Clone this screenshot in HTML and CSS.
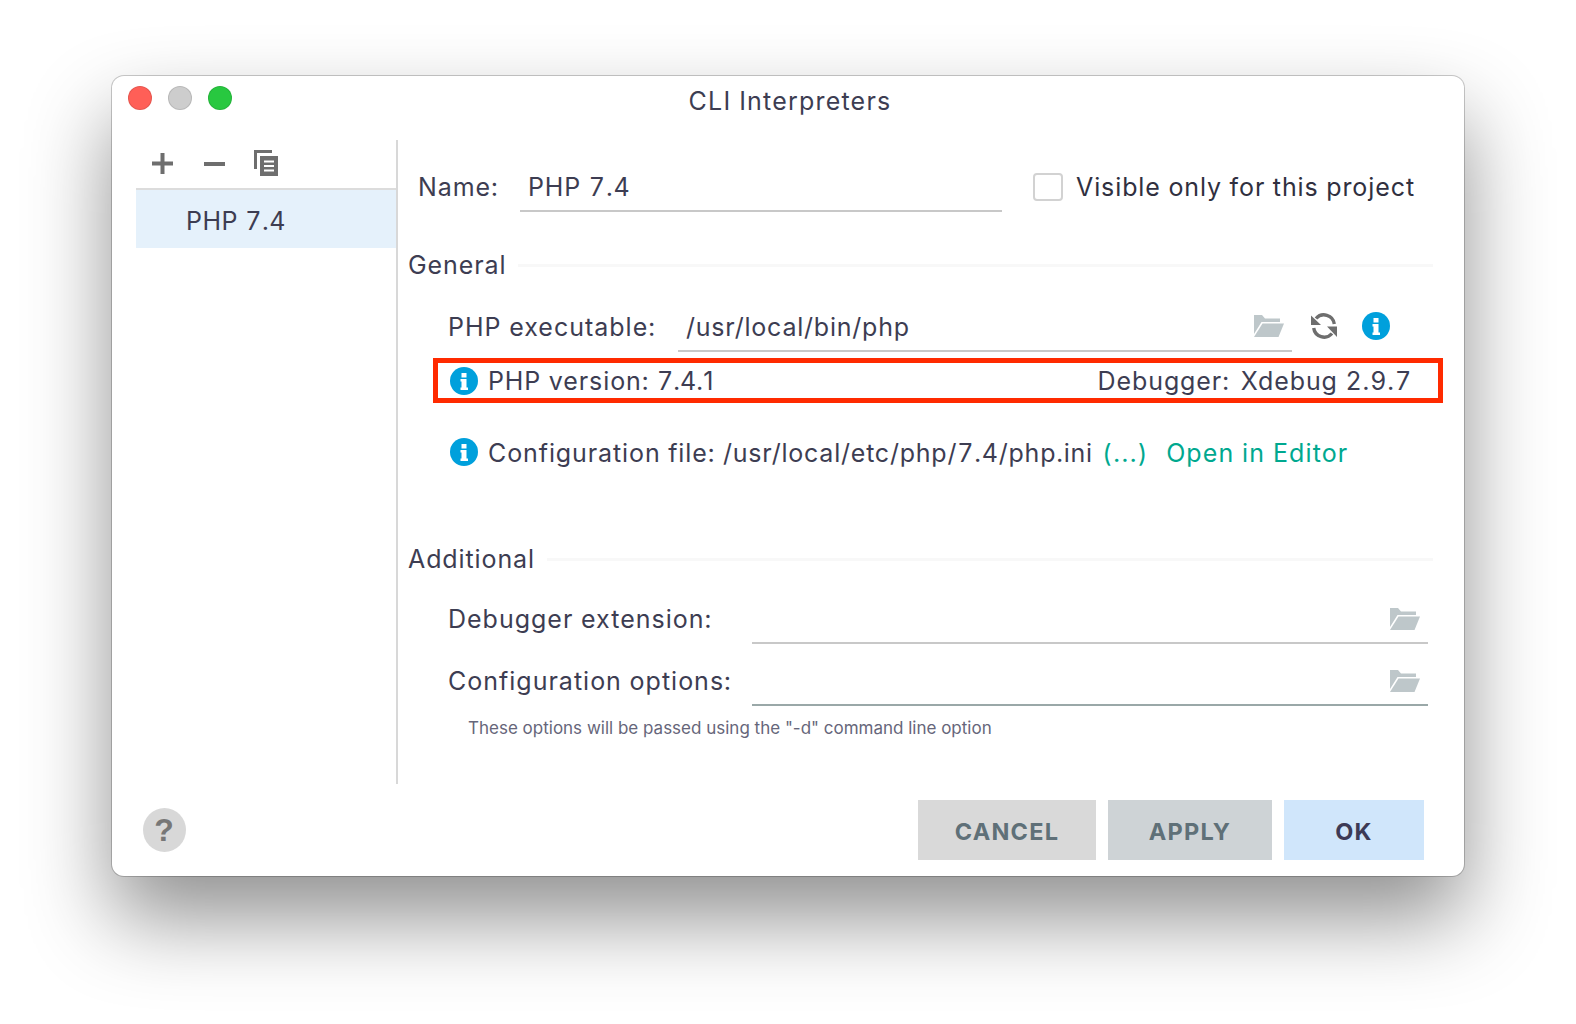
FILE: index.html
```html
<!DOCTYPE html>
<html lang="en">
<head>
<meta charset="utf-8">
<title>CLI Interpreters</title>
<link rel="stylesheet" href="styles.css">
</head>
<body>
<svg class="defs" width="0" height="0" aria-hidden="true">
  <symbol id="folder" viewBox="0 0 30 22">
    <path d="M0 0h8l3 3.5h15V7H7.5L0 19z"/>
    <path d="M8.5 8.5H30L24.5 22H0z"/>
  </symbol>
  <symbol id="info" viewBox="0 0 28 28">
    <circle cx="14" cy="14" r="14" fill="#00a0dc"/>
    <path fill="#fff" d="M11.500 6h5v4.500h-5zM10.500 12h6v8.500h1.500V23h-7.500v-2.500h1V14.500h-1z"/>
  </symbol>
</svg>
<main class="window">
  <header class="titlebar">
    <div class="lights">
      <span class="light red"></span>
      <span class="light gray"></span>
      <span class="light green"></span>
    </div>
    <div class="title">CLI Interpreters</div>
  </header>
  <div class="body">
    <aside class="sidebar">
      <div class="toolbar">
        <svg class="tool plus" viewBox="0 0 21 21"><path d="M8.500 0h4v8.500H21v4h-8.500V21h-4v-8.500H0v-4h8.500z"/></svg>
        <svg class="tool minus" viewBox="0 0 21 4"><path d="M0 0h21v4H0z"/></svg>
        <svg class="tool copy" viewBox="0 0 24 26"><path d="M0 0h18v3H3v16H0z"/><path fill-rule="evenodd" d="M6 6h18v20H6zM10 10.500v2h10v-2zM10 15v2h10v-2zM10 19.500v2h10v-2z"/></svg>
      </div>
      <div class="item">PHP 7.4</div>
    </aside>
    <section class="content">
      <div class="name-row">
        <label class="name-label">Name:</label>
        <div class="field name-field"><span class="grow">PHP 7.4</span></div>
        <span class="checkbox"></span>
        <span class="dark-text">Visible only for this project</span>
      </div>

      <div class="heading heading-general"><span>General</span><i></i></div>

      <div class="exec-row">
        <label class="exec-label">PHP executable:</label>
        <div class="field exec-field">
          <span class="grow path">/usr/local/bin/php</span>
          <svg class="folder"><use href="#folder"/></svg>
        </div>
        <svg class="refresh" viewBox="0 0 26 26" fill="none">
          <path d="M5 5.500A10.500 10.500 0 0 1 23.300 11" stroke="#6e6e6e" stroke-width="3.400"/>
          <path d="M2.700 15A10.500 10.500 0 0 0 21 20.500" stroke="#6e6e6e" stroke-width="3.400"/>
          <path d="M0 2.500V12H10z" fill="#6e6e6e"/>
          <path d="M26 24V13.500H16z" fill="#6e6e6e"/>
        </svg>
        <svg class="info info-exec"><use href="#info"/></svg>
      </div>

      <div class="version-box">
        <svg class="info"><use href="#info"/></svg>
        <span class="grow">PHP version: <span class="version">7.4.<span class="plain">1</span></span></span>
        <span class="debugger-label">Debugger:</span>
        <span>Xdebug 2.9.7</span>
      </div>

      <div class="config-row">
        <svg class="info"><use href="#info"/></svg>
        <span>Configuration file: <span class="path">/usr/local/etc/php/7.4/php.ini</span></span>
        <a class="link dots">(...)</a>
        <a class="link open">Open in Editor</a>
      </div>

      <div class="heading heading-additional"><span>Additional</span><i></i></div>

      <div class="option-row debug-row">
        <label class="option-label">Debugger extension:</label>
        <div class="field option-field">
          <span class="grow"></span>
          <svg class="folder"><use href="#folder"/></svg>
        </div>
      </div>
      <div class="option-row options-row">
        <label class="option-label">Configuration options:</label>
        <div class="field option-field dark">
          <span class="grow"></span>
          <svg class="folder"><use href="#folder"/></svg>
        </div>
      </div>
      <p class="hint">These options will be passed using the "-d" command line option</p>
    </section>
  </div>
  <footer class="footer">
    <span class="help">?</span>
    <span class="grow"></span>
    <button class="btn cancel">CANCEL</button>
    <button class="btn apply">APPLY</button>
    <button class="btn ok">OK</button>
  </footer>
</main>
</body>
</html>
```
FILE: styles.css
```css
* { box-sizing: border-box; }
html, body { margin: 0; padding: 0; background: #fff; }
body {
  height: 1024px;
  overflow: hidden;
  font-family: Inter, "Liberation Sans", sans-serif;
  font-size: 25px;
  font-feature-settings: "tnum";
  letter-spacing: .9px;
  color: #3d3d52;
  padding: 76px 0 0 112px;
}
.defs { position: absolute; }
.grow { flex: 1; }
.path { letter-spacing: .78px; }
.plain { font-feature-settings: normal; }
.version { letter-spacing: .1px; }

.window {
  width: 1352px;
  height: 800px;
  background: #fff;
  border-radius: 12px;
  box-shadow: 0 0 0 1px rgba(0,0,0,.2), 0 42px 84px rgba(0,0,0,.44);
  display: flex;
  flex-direction: column;
}

.titlebar {
  height: 64px;
  display: grid;
  grid-template-columns: 1fr auto 1fr;
  padding-top: 10px;
}
.lights { display: flex; gap: 16px; padding-left: 16px; height: 24px; }
.light { width: 24px; height: 24px; border-radius: 50%; border: 1px solid rgba(0,0,0,.1); }
.red { background: #ff5f57; }
.gray { background: #cdcdcd; }
.green { background: #28c840; }
.title { line-height: 30px; padding-left: 4px; letter-spacing: 1.2px; }

.body { height: 644px; display: flex; }
.sidebar { margin-left: 24px; border-right: 2px solid #d8d8d8; height: 100%; width: 262px; }
.toolbar {
  height: 50px;
  border-bottom: 2px solid #dcdcdc;
  display: flex;
  align-items: flex-start;
  padding: 10px 0 0 16px;
  width: 260px;
}
.tool { fill: #6e6e6e; display: block; }
.plus { width: 21px; height: 21px; margin-top: 3px; }
.minus { width: 21px; height: 4px; margin: 12px 0 0 31px; }
.copy { width: 24px; height: 26px; margin-left: 29px; }
.item {
  width: 260px;
  height: 58px;
  background: #e5f1fb;
  padding: 4px 0 0 50px;
  line-height: 54px;
  letter-spacing: .5px;
}

.content { flex: 1; padding: 22px 31px 0 10px; }
.name-row { display: flex; align-items: center; height: 50px; padding-left: 10px; }
.name-label { width: 102px; }
.field {
  display: flex;
  align-items: center;
  height: 50px;
  border-bottom: 2px solid #c8c8c8;
  padding-left: 8px;
}
.field .grow { padding-top: 2px; }
.name-field { width: 482px; }
.checkbox {
  width: 30px;
  height: 28px;
  margin: 0 13px 0 31px;
  border: 2px solid #d2d2d2;
  border-radius: 4px;
  background: #fff;
}
.dark-text { color: #30303f; }

.heading { display: flex; align-items: center; height: 30px; gap: 12px; }
.heading i { flex: 1; height: 3px; background: #f8f8f8; }
.heading-general { margin-top: 38px; }
.heading-additional { margin-top: 77px; }

.exec-row { display: flex; align-items: center; height: 50px; margin: 22px 0 0 40px; }
.exec-label { width: 230px; letter-spacing: 1px; }
.exec-field { width: 614px; padding-right: 8px; }
.folder { width: 30px; height: 22px; fill: #bec7ca; display: block; }
.refresh { width: 26px; height: 26px; margin: -2px 0 0 19px; flex: none; }
.info { width: 28px; height: 28px; flex: none; display: block; }
.info-exec { margin: -2px 0 0 25px; }

.version-box {
  display: flex;
  align-items: center;
  height: 45px;
  margin: 6px -10px 0 25px;
  padding: 0 26px 0 12px;
  border: 5px solid #ff2a00;
}
.version-box .info { margin-right: 10px; }
.debugger-label { margin-right: 11px; }

.config-row { display: flex; align-items: center; height: 30px; margin: 34px 0 0 42px; }
.config-row .info { margin-right: 10px; }
.config-row > span, .config-row a { padding-top: 2px; }
.link { color: #00a88f; }
.dots { margin-left: 9px; letter-spacing: 1.5px; }
.open { margin-left: 17px; letter-spacing: 1.1px; }

.option-row { display: flex; align-items: center; height: 50px; margin-left: 40px; margin-right: 5px; letter-spacing: 1px; }
.debug-row { margin-top: 20px; }
.options-row { margin-top: 12px; }
.option-label { width: 304px; }
.option-field { flex: 1; padding-right: 8px; }
.option-field .folder { margin-top: 2px; }
.dark { border-bottom-color: #9aa8a8; }
.hint {
  margin: 12px 0 0 60px;
  font-size: 17px;
  font-feature-settings: normal;
  letter-spacing: 0;
  line-height: 20px;
  color: #66667a;
}

.footer { flex: 1; display: flex; align-items: flex-start; padding: 16px 40px 0 31px; }
.help {
  width: 43px;
  height: 44px;
  margin-top: 8px;
  border-radius: 50%;
  background: #d8d8d8;
  color: #777;
  font: 700 32px/44px "Liberation Sans", sans-serif;
  text-align: center;
}
.btn {
  height: 60px;
  border: 0;
  margin: 0 0 0 12px;
  padding: 2px 0 0;
  font: 700 23.500px Inter, "Liberation Sans", sans-serif;
  letter-spacing: 1.200px;
  color: #5f7078;
}
.cancel { width: 178px; background: #d9d9d9; }
.apply { width: 164px; background: #ced3d6; }
.ok { width: 140px; background: #d0e6fb; color: #3d3a55; }
```
